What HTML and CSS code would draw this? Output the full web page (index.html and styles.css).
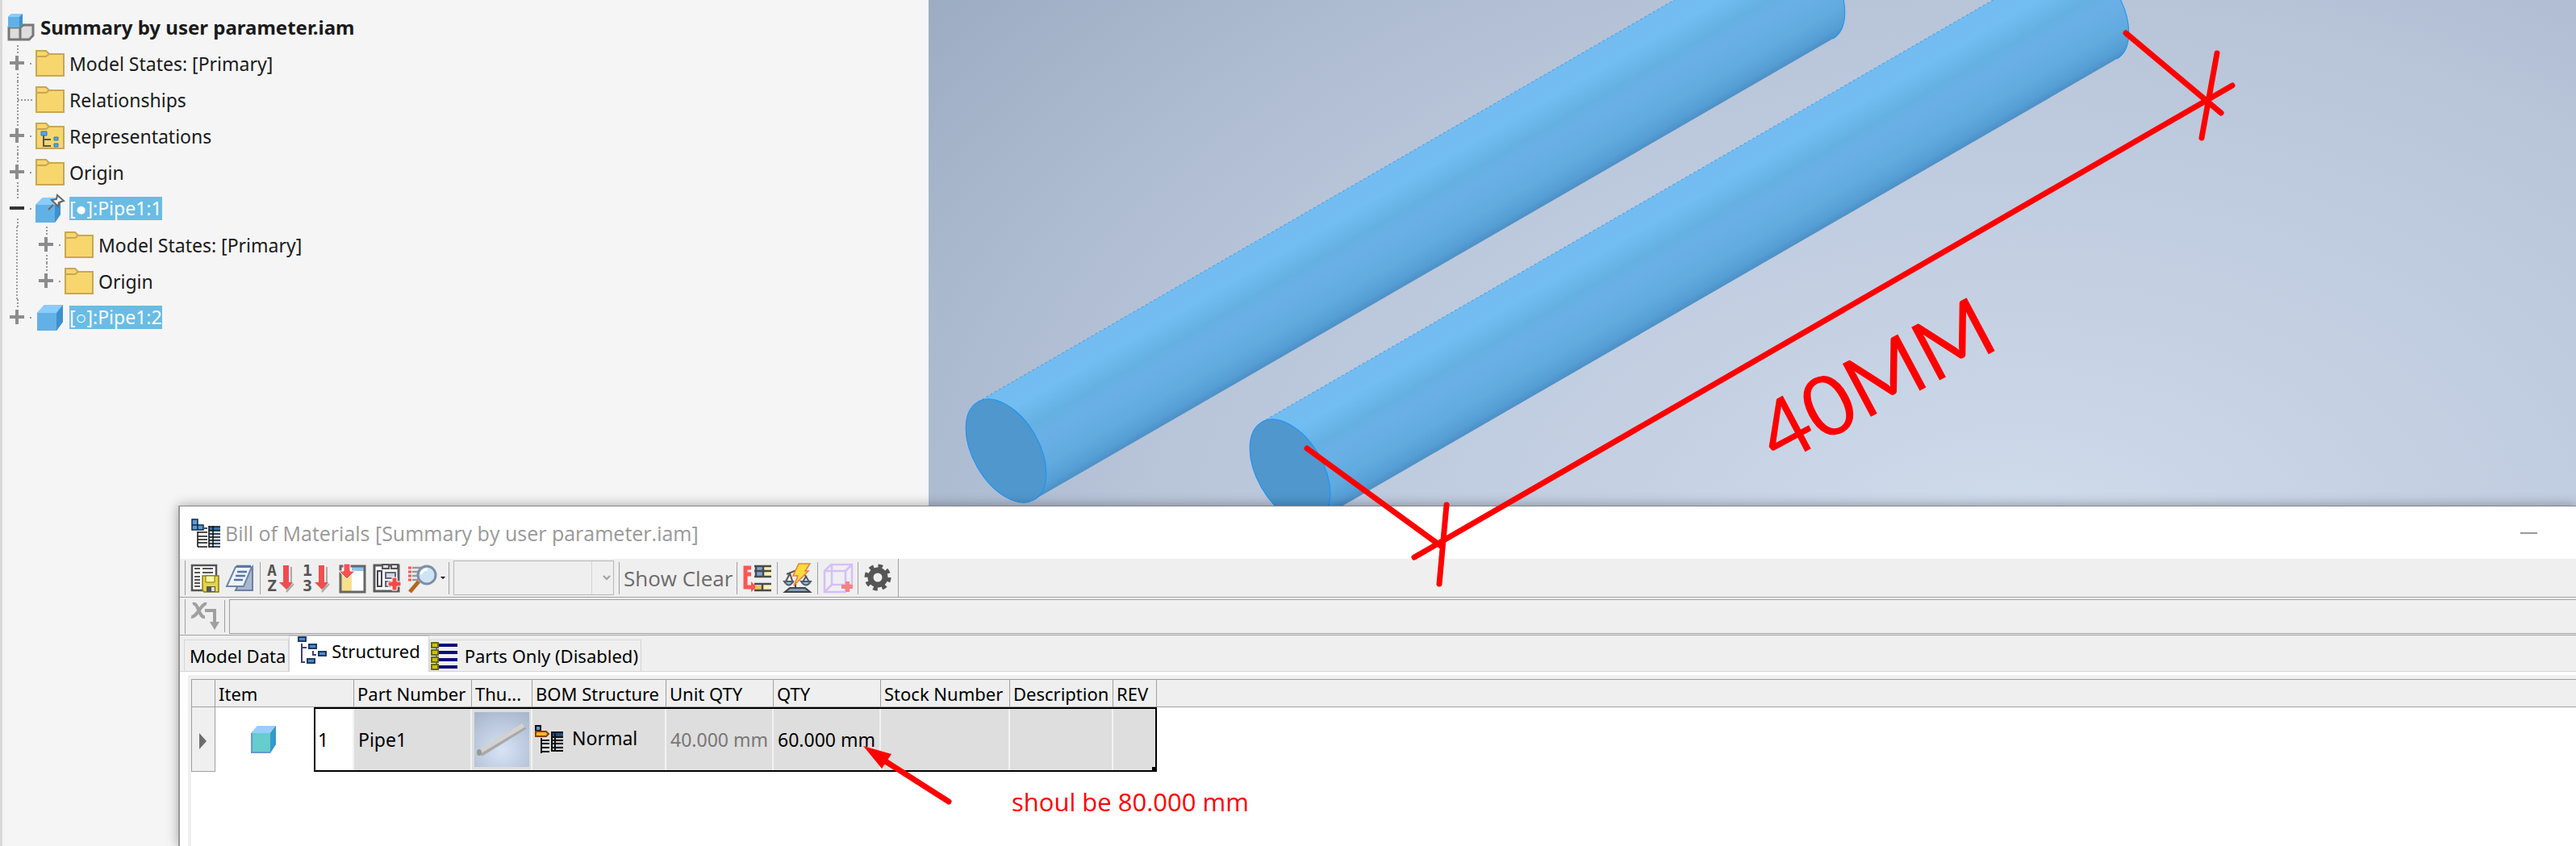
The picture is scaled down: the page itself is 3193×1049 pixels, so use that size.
FILE: index.html
```html
<!DOCTYPE html>
<html lang="en">
<head>
  <meta charset="UTF-8" />
  <meta name="viewport" content="width=device-width, initial-scale=1.0"/>
  <title>Bill of Materials</title>
  <link rel="stylesheet" href="styles.css">
</head>
<body>
  <!-- shared icons -->
  <svg class="defs" width="0" height="0" aria-hidden="true">
    <symbol id="folder" viewBox="0 0 36 36">
      <path d="M1 33V2H13L17 6H35V33Z" fill="#f7d66e" stroke="#c9a654" stroke-width="2"/>
      <path d="M1 9H13L17 6" fill="none" stroke="#c9a654" stroke-width="2"/>
    </symbol>
    <symbol id="cube" viewBox="0 0 36 36">
      <path d="M2 12L11 2H34V23L26 34H2Z" fill="#62b1e6"/>
      <path d="M2 12L11 2H34L26 12Z" fill="#8accff"/>
      <path d="M26 12L34 2V23L26 34Z" fill="#3f90cf"/>
    </symbol>
    <symbol id="plus" viewBox="0 0 40 45">
      <path d="M18 0V10M18 35V45" stroke="#999" stroke-width="2" stroke-dasharray="2 2"/>
      <path d="M8 22H26M17 13V31" stroke="#8c8c8c" stroke-width="4"/>
      <path d="M33 23H35" stroke="#999" stroke-width="2"/>
    </symbol>
    <symbol id="plus-last" viewBox="0 0 40 45">
      <path d="M18 0V10" stroke="#999" stroke-width="2" stroke-dasharray="2 2"/>
      <path d="M8 22H26M17 13V31" stroke="#8c8c8c" stroke-width="4"/>
      <path d="M33 23H35" stroke="#999" stroke-width="2"/>
    </symbol>
    <symbol id="minus" viewBox="0 0 40 45">
      <path d="M18 0V10M18 35V45" stroke="#999" stroke-width="2" stroke-dasharray="2 2"/>
      <path d="M8 22H26" stroke="#333" stroke-width="4"/>
      <path d="M33 23H35" stroke="#999" stroke-width="2"/>
    </symbol>
    <symbol id="leaf" viewBox="0 0 40 45">
      <path d="M18 0V45M18 23H36" stroke="#999" stroke-width="2" stroke-dasharray="2 2"/>
    </symbol>
  </svg>

  <div class="workspace">
    <aside class="browser">
      <div class="row root">
        <svg class="icon" viewBox="0 0 36 36">
          <path d="M3 18H17V33H3ZM17 18L21 15H33V28L28 33H17Z" fill="#ddd" stroke="#777" stroke-width="3"/>
          <path d="M2 5L6 1H20V14L16 18H2Z" fill="#62b1e6"/>
          <path d="M2 5L6 1H20L16 5Z" fill="#8accff"/>
          <path d="M16 5L20 1V14L16 18Z" fill="#3f90cf"/>
        </svg>
        <strong>Summary by user parameter.iam</strong>
      </div>
      <ul class="tree">
        <li><div class="row"><button class="twisty" aria-label="Expand"><svg><use href="#plus"/></svg></button><svg class="icon"><use href="#folder"/></svg><span>Model States: [Primary]</span></div></li>
        <li><div class="row"><span class="twisty"><svg><use href="#leaf"/></svg></span><svg class="icon"><use href="#folder"/></svg><span>Relationships</span></div></li>
        <li><div class="row"><button class="twisty" aria-label="Expand"><svg><use href="#plus"/></svg></button>
          <svg class="icon" viewBox="0 0 36 36">
            <use href="#folder"/>
            <path d="M10 17V30H19M10 22H19" fill="none" stroke="#555" stroke-width="2"/>
            <path d="M7 12H14V17H7ZM23 19H28V23H23ZM23 27H28V31H23Z" fill="#56a8de" stroke="#2d7ab5" stroke-width="1"/>
          </svg><span>Representations</span></div></li>
        <li><div class="row"><button class="twisty" aria-label="Expand"><svg><use href="#plus"/></svg></button><svg class="icon"><use href="#folder"/></svg><span>Origin</span></div></li>
        <li><div class="row"><button class="twisty" aria-label="Collapse"><svg><use href="#minus"/></svg></button>
          <svg class="icon" viewBox="0 0 36 36">
            <path d="M0 13L9 4H31V25L24 35H0Z" fill="#62b1e6"/>
            <path d="M0 13L9 4H31L24 13Z" fill="#8accff"/>
            <path d="M24 13L31 6V25L24 35Z" fill="#3f90cf"/>
            <path d="M16 19L22 13M20 7L28 15L29 10L35 8L27 1L26 6Z" fill="#f5f5f5" stroke="#666" stroke-width="2"/>
          </svg><span class="selected">[●]:Pipe1:1</span></div>
          <ul class="children">
            <li><div class="row"><button class="twisty" aria-label="Expand"><svg><use href="#plus"/></svg></button><svg class="icon"><use href="#folder"/></svg><span>Model States: [Primary]</span></div></li>
            <li><div class="row"><button class="twisty" aria-label="Expand"><svg><use href="#plus-last"/></svg></button><svg class="icon"><use href="#folder"/></svg><span>Origin</span></div></li>
          </ul>
        </li>
        <li><div class="row"><button class="twisty" aria-label="Expand"><svg><use href="#plus-last"/></svg></button><svg class="icon"><use href="#cube"/></svg><span class="selected">[○]:Pipe1:2</span></div></li>
      </ul>
    </aside>

    <main class="viewport">
      <svg class="scene" width="2042" height="640">
        <defs>
          <linearGradient id="tube" x1="0" y1="0" x2="0" y2="1">
            <stop offset="0" stop-color="#73bcf1"/>
            <stop offset=".2" stop-color="#72bdf1"/>
            <stop offset=".42" stop-color="#65b0e3"/>
            <stop offset=".55" stop-color="#6ab0e7"/>
            <stop offset=".78" stop-color="#61abdf"/>
            <stop offset=".93" stop-color="#569fd6"/>
            <stop offset="1" stop-color="#4c90c6"/>
          </linearGradient>
          <g id="pipe">
            <path d="M0 -70H1143A41 70 0 0 1 1143 70H0Z" fill="url(#tube)"/>
            <path d="M1143 -70A41 70 0 0 1 1143 70" fill="none" stroke="#1592fa" stroke-width="1"/>
            <path d="M0 -70H1143" stroke="#4a9bd8" stroke-width="1" stroke-dasharray="3 3"/>
            <ellipse rx="41" ry="70" fill="#4f97cd" stroke="#1592fa" stroke-width="1"/>
          </g>
        </defs>
        <use href="#pipe" transform="translate(96 559) rotate(-30)"/>
        <use href="#pipe" transform="translate(448 584) rotate(-30)"/>
      </svg>
    </main>
  </div>

  <section class="dialog">
    <header class="titlebar">
      <svg class="icon" viewBox="0 0 36 36">
        <path d="M1 1H8V14H1ZM8 8H15V14H8ZM1 8H8" fill="#5b9bd5" stroke="#102a43" stroke-width="1.5"/>
        <path d="M8 16V35M8 17H20M8 22H20M8 26H20M8 30H20M8 35H20M16 12H20" stroke="#111" stroke-width="1.5"/>
        <path d="M22 10H36V35H22Z" fill="#cfe6f8"/>
        <path d="M22 10H36V15H22Z" fill="#2f75b5"/>
        <path d="M22 9V36M27 9V36M22 10H36M22 15H36M22 19H36M22 23H36M22 27H36M22 31H36M22 35H36" stroke="#111" stroke-width="1.5"/>
      </svg>
      <span>Bill of Materials [Summary by user parameter.iam]</span>
      <button class="minimize" aria-label="Minimize"></button>
    </header>

    <div class="toolbar-row">
      <div class="toolbar">
        <button class="tool" aria-label="Export"><svg class="icon" viewBox="0 0 36 36">
          <path d="M2 2H32V33H2Z" fill="#fff" stroke="#555" stroke-width="2.5"/>
          <path d="M5 6H12M5 11H12M5 16H12M5 20H12M5 24H12M5 28H12M15 6H28M15 11H28" stroke="#555" stroke-width="2"/>
          <path d="M15 15H35V35H17L15 33Z" fill="#e5d44a" stroke="#8a7c1c" stroke-width="1.5"/>
          <path d="M19 15H30V23H19Z" fill="#fbf9a4" stroke="#7a7220"/>
          <path d="M20 28H31V35H20Z" fill="#555"/><path d="M26 29H30V34H26Z" fill="#ddd"/>
        </svg></button>
        <button class="tool" aria-label="Engineer's notebook"><svg class="icon" viewBox="0 0 36 36">
          <path d="M14 29L33 4V33H12Z" fill="#a9b8d0" stroke="#6b7fa3" stroke-width="2"/>
          <path d="M12 4H32L22 28H1Z" fill="#eef3fb" stroke="#6b85ad" stroke-width="2"/>
          <path d="M14 10H26M12 15H24M10 20H21M13 3H31" stroke="#5674a6" stroke-width="2.5"/>
        </svg></button>
        <i class="sep"></i>
        <button class="tool" aria-label="Sort"><svg class="icon" viewBox="0 0 36 36">
          <text x="1" y="15" class="glyph">A</text><text x="1" y="34" class="glyph">Z</text>
          <path d="M31 4V24L25 35L34 25" fill="none" stroke="#aaa" stroke-width="2"/>
          <path d="M21 2H28V23H33L25 32L16 23H21Z" fill="#f04d4d"/>
        </svg></button>
        <button class="tool" aria-label="Renumber items"><svg class="icon" viewBox="0 0 36 36">
          <text x="1" y="15" class="glyph">1</text><text x="1" y="34" class="glyph">3</text>
          <path d="M31 4V24L25 35L34 25" fill="none" stroke="#aaa" stroke-width="2"/>
          <path d="M21 2H28V23H33L25 32L16 23H21Z" fill="#f04d4d"/>
        </svg></button>
        <button class="tool" aria-label="Choose columns"><svg class="icon" viewBox="0 0 36 36">
          <path d="M4 3H34V35H4Z" fill="#fdfdfd"/><path d="M4 9H18V35H4Z" fill="#f8e08a"/><path d="M18 4H34V9H18Z" fill="#8ec3f0"/>
          <path d="M4 3H34V35H4Z" fill="none" stroke="#666" stroke-width="3"/>
          <path d="M8 0H16V9H22L12 19L2 9H8Z" fill="#f55252" stroke="#fff" stroke-width="1"/>
        </svg></button>
        <button class="tool" aria-label="Add custom columns"><svg class="icon" viewBox="0 0 36 36">
          <path d="M2 2H32V34H2Z" fill="#fff" stroke="#5a5a5a" stroke-width="3"/>
          <path d="M12 1H20V6H12ZM23 1H31V6H23Z" fill="#ddd" stroke="#555" stroke-width="2"/>
          <path d="M6 9H11V28H6Z" fill="#fff" stroke="#445" stroke-width="2"/>
          <path d="M16 11H28V18H16ZM16 22H22V28H16Z" fill="#cdd7e6" stroke="#667" stroke-width="2"/>
          <path d="M24 17H30V22H35V28H30V33H24V28H19V22H24Z" fill="#f24a4a" stroke="#fff" stroke-width="1"/>
        </svg></button>
        <button class="tool wide" aria-label="Filter"><svg class="icon" viewBox="0 0 36 36">
          <path d="M0 5H4M0 10H4M0 15H4M0 20H4" stroke="#f55" stroke-width="3"/>
          <path d="M5 5H16M5 10H14M5 15H12M5 20H12" stroke="#999" stroke-width="2.5"/>
          <path d="M13 22L2 35" stroke="#b5651d" stroke-width="5"/>
          <circle cx="23" cy="14" r="11" fill="#cfe3f6" stroke="#7d8fa5" stroke-width="3"/>
          <path d="M16 13A8 8 0 0 1 24 7" fill="none" stroke="#fff" stroke-width="3"/>
        </svg><svg class="caret" width="8" height="6"><path d="M1 1H7L4 4Z"/></svg></button>
        <i class="sep"></i>
        <select class="view-select" aria-label="View" disabled><option></option></select>
        <i class="sep"></i>
        <button class="show-clear">Show Clear</button>
        <i class="sep"></i>
        <button class="tool" aria-label="Part number merge"><svg class="icon" viewBox="0 0 36 36">
          <path d="M10 5H3V29H12M3 13H10" fill="none" stroke="#fb5555" stroke-width="5"/><path d="M10 22L17 29L10 35Z" fill="#fb5555"/>
          <path d="M15 3H25V15H15Z" fill="#7aa5d6"/><path d="M25 3H35V15H25ZM15 27H35V32H15Z" fill="#fdf0b5"/><path d="M15 27H23V32H15Z" fill="#f0c850"/>
          <path d="M14 3H35M14 9H35M14 16H35M16 3V16M25 3V16M14 25H35M14 33H35M24 25V33" stroke="#4a4a4a" stroke-width="2.5"/>
        </svg></button>
        <i class="sep"></i>
        <button class="tool" aria-label="Update mass properties"><svg class="icon" viewBox="0 0 36 36">
          <path d="M4 13L16 8L29 16M8 12L2 24M8 12L12 24M28 16L23 24M28 16L33 24" fill="none" stroke="#555" stroke-width="2"/>
          <path d="M1 22H12Q7 31 1 22ZM22 22H34Q28 31 22 22Z" fill="#9eb9d1" stroke="#4d5d6c" stroke-width="2"/>
          <path d="M15 24V31M2 35H33L27 30H8Z" fill="#7da0bd" stroke="#444" stroke-width="2"/>
          <path d="M19 0H33L27 9H31L13 27L18 15H12Z" fill="#fcdc3c" stroke="#f47b3a" stroke-width="1.5"/>
        </svg></button>
        <i class="sep"></i>
        <button class="tool" aria-label="Add virtual component"><svg class="icon" viewBox="0 0 36 36">
          <path d="M1 9L9 1H35V27L27 35H1ZM1 9H27V35M27 9L35 1M10 1V26H35M10 26L1 35" fill="none" stroke="#d5bffa" stroke-width="2.5"/>
          <path d="M27 22H32V26H36V31H32V35H27V31H22V26H27Z" fill="#f98282"/>
        </svg></button>
        <i class="sep"></i>
        <button class="tool" aria-label="Settings"><svg class="icon" viewBox="0 0 36 36">
          <circle cx="17" cy="17" r="9" fill="none" stroke="#555" stroke-width="7"/>
          <circle cx="17" cy="17" r="14" fill="none" stroke="#555" stroke-width="5" stroke-dasharray="5.5 5.5"/>
        </svg></button>
      </div>
    </div>

    <div class="formula">
      <button class="tool" aria-label="Formula"><svg class="icon" viewBox="0 0 36 36">
        <path d="M3 3C10 0 10 20 18 19M20 3C14 1 8 20 1 19" fill="none" stroke="#a0a0a0" stroke-width="4"/>
        <path d="M18 11H30V27" fill="none" stroke="#a0a0a0" stroke-width="4"/><path d="M24 25H36L30 35Z" fill="#a0a0a0"/>
      </svg></button>
      <i class="sep"></i>
      <input type="text" aria-label="Formula value" disabled>
    </div>

    <div class="tabs" role="tablist">
      <button class="tab" role="tab">Model Data</button>
      <button class="tab active" role="tab"><svg class="icon" viewBox="0 0 36 36">
        <path d="M5 9V32H9M5 14H11M19 18V23H23" fill="none" stroke="#41417a" stroke-width="2"/>
        <path d="M1 1H10V6H1ZM14 10H23V15H14ZM26 19H35V24H26ZM12 28H21V33H12Z" fill="#4b8bc9" stroke="#1d3a66" stroke-width="2"/>
      </svg>Structured</button>
      <button class="tab parts" role="tab"><svg class="icon" viewBox="0 0 36 36">
        <path d="M7 4V34" stroke="#777" stroke-width="2"/>
        <path d="M10 5H33M10 14H33M10 23H33M10 32H33" stroke="#0b0b7c" stroke-width="4"/>
        <path d="M1 2H9V8H1ZM1 11H9V17H1ZM1 20H9V26H1ZM1 29H9V35H1Z" fill="#c9c40e" stroke="#6b6a1a" stroke-width="2"/>
      </svg>Parts Only (Disabled)</button>
    </div>

    <div class="grid">
      <table>
        <colgroup>
          <col class="c-mark"><col class="c-icon"><col class="c-item"><col class="c-part"><col class="c-thumb"><col class="c-bom"><col class="c-qty"><col class="c-qty"><col class="c-stock"><col class="c-desc"><col class="c-rev"><col>
        </colgroup>
        <thead>
          <tr>
            <th></th><th colspan="2">Item</th><th>Part Number</th><th>Thu...</th><th>BOM Structure</th><th>Unit QTY</th><th>QTY</th><th>Stock Number</th><th>Description</th><th>REV</th><th></th>
          </tr>
        </thead>
        <tbody>
          <tr>
            <td class="marker"><svg width="10" height="20"><path d="M0 0L9 10L0 20Z" fill="#6d6d6d"/></svg></td>
            <td class="part-icon"><svg class="icon" viewBox="0 0 36 36">
              <path d="M2 12L10 1H33V24L25 35H2Z" fill="#66cccc"/>
              <path d="M2 10L10 1H33L26 10Z" fill="#99ccff"/><path d="M26 10L33 1V24L26 35Z" fill="#3399cc"/>
              <path d="M3 10V34H26" fill="none" stroke="#6699cc" stroke-width="2"/>
            </svg></td>
            <td class="cell first">1</td>
            <td class="cell">Pipe1</td>
            <td class="cell thumb"><svg width="68" height="68" viewBox="0 0 68 68">
              <path d="M7 51L62 17" stroke="#a9a9a9" stroke-width="9"/>
              <path d="M6 49L61 16" stroke="#d2d2d2" stroke-width="6"/>
              <ellipse cx="6" cy="50" rx="3" ry="4" fill="#989898"/>
            </svg></td>
            <td class="cell bom"><svg class="icon" viewBox="0 0 36 36">
              <path d="M1 1H7V7H1Z" fill="#5b9bd5" stroke="#111" stroke-width="2"/>
              <path d="M1 8H14L17 11L14 14H1Z" fill="#fdb72c" stroke="#8a3e00" stroke-width="2"/>
              <path d="M8 16V35M8 19H18M8 23H18M8 28H18M8 33H18" stroke="#111" stroke-width="2"/>
              <path d="M20 9H35V33H20Z" fill="#c9ccd0"/><path d="M20 9H35V14H20Z" fill="#204d86"/>
              <path d="M21 9V33M25 9V33M20 9H35M20 15H35M20 19H35M20 23H35M20 28H35M20 32H35" stroke="#111" stroke-width="2"/>
            </svg>Normal</td>
            <td class="cell muted">40.000 mm</td>
            <td class="cell">60.000 mm</td>
            <td class="cell"></td>
            <td class="cell"></td>
            <td class="cell last"></td>
            <td></td>
          </tr>
        </tbody>
      </table>
    </div>
  </section>

  <!-- red markup over the model and the table -->
  <svg class="markup" width="3193" height="1049">
    <path class="ink" d="M1753 691L2767 106M1620 556L1786 677M1793 626L1784 724M2635 41L2753 140M2748 66L2729 171"/>
    <text class="dimension" transform="translate(2204 578) rotate(-28)">40MM</text>
    <path class="arrow" d="M1176 994L1096 943"/>
    <path d="M1070 925L1105 935L1093 953Z" fill="#f00"/>
    <text class="note" x="1254" y="1006">shoul be 80.000 mm</text>
  </svg>
</body>
</html>
```
FILE: styles.css
```css
* {
  box-sizing: border-box;
}

body {
  margin: 0;
  height: 100vh;
  position: relative;
  overflow: hidden;
  font-family: "Noto Sans", sans-serif;
  font-size: 23px;
  color: #1a1a1a;
  background-color: #f5f5f5;
}

button {
  font: inherit;
  color: inherit;
  background: none;
  border: none;
  padding: 0;
}

.defs {
  position: absolute;
}

.icon {
  width: 36px;
  height: 36px;
  flex: none;
  overflow: visible;
}

.workspace {
  display: flex;
  height: 100%;
}

/* model browser */
.browser {
  flex: 0 0 1151px;
  border-left: 3px solid #d9d9d9;
  padding-top: 11px;
}

.row {
  display: flex;
  align-items: center;
  height: 45px;
  white-space: nowrap;
}

.row .icon {
  margin-right: 6px;
}

.root {
  padding-left: 5px;
  font-size: 24px;
}

.tree,
.children {
  list-style: none;
  margin: 0;
  padding: 0;
}

.children {
  margin-left: 17px;
  padding-left: 17px;
  border-left: 2px dotted #a0a0a0;
}

.twisty,
.twisty svg {
  display: block;
  width: 40px;
  height: 45px;
  flex: none;
}

.tree .row {
  padding-left: 1px;
}

.selected {
  background-color: #69bce4;
  color: white;
  line-height: 29px;
}

/* 3d view */
.viewport {
  flex: 1;
  overflow: hidden;
  background: radial-gradient(ellipse 1700px 1100px at 66% 700px, #d0ddec 0%, #c1cde0 40%, #b8c4d8 64%, #adbbd0 80%, #9aaac0 104%);
}

.scene {
  display: block;
}

/* bill of materials window */
.dialog {
  position: absolute;
  left: 221px;
  top: 627px;
  right: 0;
  bottom: 0;
  display: flex;
  flex-direction: column;
  background-color: white;
  border-left: 2px solid #999;
  border-top: 1px solid #888;
  box-shadow: 0 0 14px rgba(0, 0, 0, 0.35);
  color: black;
}

.titlebar {
  display: flex;
  align-items: center;
  height: 65px;
  padding: 0 48px 0 14px;
  font-family: "Open Sans", sans-serif;
  font-size: 25px;
  color: #999;
}

.titlebar span {
  flex: 1;
  margin-left: 6px;
}

.minimize {
  width: 21px;
  height: 2px;
  background-color: #999;
}

.toolbar-row {
  display: flex;
  background-color: #efefef;
  border-bottom: 1px solid #a0a0a0;
}

.toolbar,
.formula {
  display: flex;
  align-items: center;
  height: 47px;
}

.toolbar {
  border-right: 1px solid #a0a0a0;
}

.toolbar::before,
.formula::before {
  content: "";
  width: 2px;
  height: 43px;
  margin: 0 4px;
  border-right: 1px solid #a0a0a0;
}

.tool {
  display: flex;
  align-items: center;
  width: 44px;
  padding-left: 2px;
}

.tool.wide {
  width: 52px;
}

.caret {
  margin-left: 3px;
}

.sep {
  width: 1px;
  height: 40px;
  margin-right: 5px;
  background-color: #a0a0a0;
}

.glyph {
  font: bold 20px "DejaVu Sans Mono", monospace;
  fill: #555;
}

.view-select {
  width: 199px;
  height: 43px;
  margin-right: 6px;
  background: #efefef linear-gradient(#c8c8c8, #c8c8c8) 170px 0 / 1px 100% no-repeat;
  border: 1px solid #a0a0a0;
}

.show-clear {
  width: 140px;
  font-family: "Open Sans", sans-serif;
  font-size: 26px;
  text-align: left;
  white-space: nowrap;
  color: #6b6b6b;
}

.formula {
  background-color: #efefef;
  border-bottom: 1px solid #a0a0a0;
}

.formula input {
  flex: 1;
  height: 43px;
  background-color: #efefef;
  border: 1px solid #a0a0a0;
  border-right: none;
}

/* tabs */
.tabs {
  display: flex;
  align-items: flex-end;
  height: 45px;
  padding-left: 5px;
  background-color: #efefef;
  border-bottom: 1px solid #d5d5d5;
  font-size: 22px;
}

.tab {
  display: flex;
  align-items: center;
  height: 39px;
  padding: 0 3px 0 6px;
  border: 1px solid #d5d5d5;
  border-bottom: none;
  white-space: nowrap;
}

.tab .icon {
  margin-right: 6px;
}

.tab.active {
  height: 45px;
  padding: 0 10px 8px;
  margin-bottom: -1px;
  background-color: white;
}

.tab.parts {
  padding-left: 1px;
}

/* parts table */
.grid {
  flex: 1;
  margin: 4px 0 0 10px;
  padding: 5px 0 0 4px;
  background: linear-gradient(#efefef, #efefef) 0 0 / 100% 5px no-repeat, linear-gradient(#efefef, #efefef) 0 0 / 4px 100% no-repeat;
}

table {
  width: 100%;
  height: 100%;
  table-layout: fixed;
  border-collapse: separate;
  border-spacing: 0;
  border-top: 1px solid #a0a0a0;
  border-left: 1px solid #a0a0a0;
}

.grid table {
  height: auto;
}

.c-mark { width: 29px; }
.c-icon { width: 122px; }
.c-item { width: 50px; }
.c-part { width: 146px; }
.c-thumb { width: 75px; }
.c-bom { width: 166px; }
.c-qty { width: 133px; }
.c-stock { width: 160px; }
.c-desc { width: 128px; }
.c-rev { width: 54px; }

th {
  height: 34px;
  padding: 0 0 0 4px;
  font-size: 22px;
  line-height: 30px;
  font-weight: normal;
  text-align: left;
  white-space: nowrap;
  background-color: #efefef;
  border-right: 1px solid #a0a0a0;
  border-bottom: 1px solid #a0a0a0;
}

th:last-child {
  border-right: none;
}

td {
  height: 80px;
  padding: 0;
}

.marker {
  background-color: #efefef;
  border-right: 1px solid #a0a0a0;
  border-bottom: 1px solid #a0a0a0;
  text-align: center;
}

.marker svg {
  vertical-align: middle;
}

.part-icon {
  padding-left: 42px;
}

.part-icon .icon {
  display: block;
}

.cell {
  padding-left: 5px;
  background-color: #dedede;
  border-top: 2px solid black;
  border-bottom: 2px solid black;
  white-space: nowrap;
  box-shadow: inset -2px 0 0 #f2f2f2;
}

.first {
  padding-left: 3px;
  background-color: white;
  border-left: 2px solid black;
}

.last {
  border-right: 2px solid black;
  box-shadow: none;
  background: linear-gradient(black, black) right bottom / 4px 4px no-repeat #dedede;
}

.muted {
  color: #777;
}

.thumb {
  padding-left: 3px;
}

.thumb svg {
  display: block;
  background: radial-gradient(circle at 50% 70%, #d8e3f5, #a5b4cb);
}

.bom {
  padding-left: 3px;
}

.bom .icon {
  vertical-align: middle;
  margin-right: 10px;
}

/* markup layer */
.markup {
  position: absolute;
  left: 0;
  top: 0;
  pointer-events: none;
}

.ink {
  fill: none;
  stroke: red;
  stroke-width: 7;
  stroke-linecap: round;
}

.arrow {
  stroke: red;
  stroke-width: 7;
  stroke-linecap: round;
}

.dimension {
  font: 104px Lato, sans-serif;
  fill: red;
}

.note {
  font: 31px "Open Sans", sans-serif;
  fill: red;
}
```
